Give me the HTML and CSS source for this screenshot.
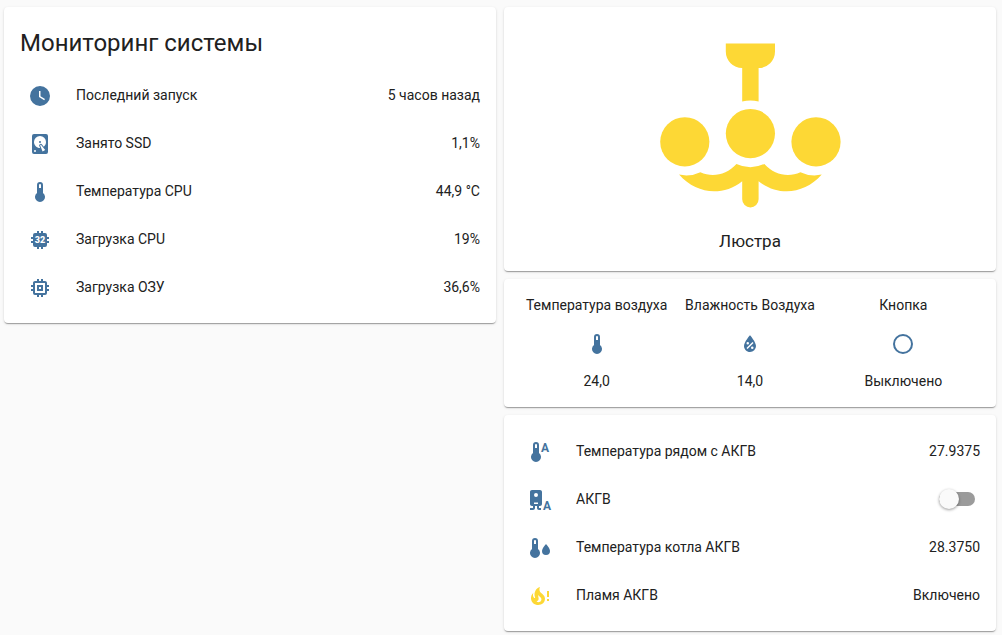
FILE: index.html
```html
<!DOCTYPE html>
<html lang="ru">
<head>
  <meta charset="UTF-8">
  <meta name="viewport" content="width=device-width, initial-scale=1">
  <title>Мониторинг системы</title>
  <link rel="stylesheet" href="styles.css">
</head>
<body>
  <main class="columns">
    <div class="column">
      <section class="card">
        <h1 class="card-header">Мониторинг системы</h1>
        <div class="entities">
          <div class="row">
            <svg class="icon" viewBox="0 0 24 24"><path d="M12,2A10,10 0 0,0 2,12A10,10 0 0,0 12,22A10,10 0 0,0 22,12A10,10 0 0,0 12,2M16.2,16.2L11,13V7H12.5V12.2L17,14.9L16.2,16.2Z"/></svg>
            <span class="name">Последний запуск</span>
            <span class="state">5 часов назад</span>
          </div>
          <div class="row">
            <svg class="icon" viewBox="0 0 24 24"><path d="M6,2H18A2,2 0 0,1 20,4V20A2,2 0 0,1 18,22H6A2,2 0 0,1 4,20V4A2,2 0 0,1 6,2M12,4A6,6 0 0,0 6,10C6,13.31 8.69,16 12.1,16L11.22,13.77C10.95,13.29 11.11,12.68 11.59,12.4L12.45,11.9C12.93,11.63 13.54,11.79 13.82,12.27L15.74,14.69C17.12,13.59 18,11.9 18,10A6,6 0 0,0 12,4M12,9A1,1 0 0,1 13,10A1,1 0 0,1 12,11A1,1 0 0,1 11,10A1,1 0 0,1 12,9M7,18A1,1 0 0,0 6,19A1,1 0 0,0 7,20A1,1 0 0,0 8,19A1,1 0 0,0 7,18M12.09,13.27L14.58,19.58L17.17,18.08L12.95,12.77L12.09,13.27Z"/></svg>
            <span class="name">Занято SSD</span>
            <span class="state">1,1%</span>
          </div>
          <div class="row">
            <svg class="icon" viewBox="0 0 24 24"><path d="M15 13V5A3 3 0 0 0 9 5V13A5 5 0 1 0 15 13M12 4A1 1 0 0 1 13 5V8H11V5A1 1 0 0 1 12 4Z"/></svg>
            <span class="name">Температура CPU</span>
            <span class="state">44,9 °C</span>
          </div>
          <div class="row">
            <svg class="icon" viewBox="0 0 24 24"><path d="M9,3V5H7A2,2 0 0,0 5,7V9H3V11H5V13H3V15H5V17A2,2 0 0,0 7,19H9V21H11V19H13V21H15V19H17A2,2 0 0,0 19,17V15H21V13H19V11H21V9H19V7A2,2 0 0,0 17,5H15V3H13V5H11V3Z"/><text class="bits" x="12" y="15" text-anchor="middle">32</text></svg>
            <span class="name">Загрузка CPU</span>
            <span class="state">19%</span>
          </div>
          <div class="row">
            <svg class="icon" viewBox="0 0 24 24"><path d="M17,17H7V7H17M21,11V9H19V7C19,5.89 18.1,5 17,5H15V3H13V5H11V3H9V5H7C5.89,5 5,5.89 5,7V9H3V11H5V13H3V15H5V17A2,2 0 0,0 7,19H9V21H11V19H13V21H15V19H17A2,2 0 0,0 19,17V15H21V13H19V11M13,13H11V11H13M15,9H9V15H15V9Z"/></svg>
            <span class="name">Загрузка ОЗУ</span>
            <span class="state">36,6%</span>
          </div>
        </div>
      </section>
    </div>

    <div class="column">
      <section class="card light">
        <svg class="light-icon" viewBox="0 0 24 24">
          <circle cx="4" cy="14" r="3"/>
          <circle cx="12" cy="13" r="3"/>
          <circle cx="20" cy="14" r="3"/>
          <path d="M9,2H15V3A2,2 0 0,1 13,5V9.1A4,4 0 0,0 11,9.1V5A2,2 0 0,1 9,3Z"/>
          <path d="M3.3,18A4,4 0 0,0 5.9,17.7C7.4,18.4 9.1,18 10.3,16.7A4,4 0 0,0 13.7,16.7C14.9,18 16.6,18.4 18.1,17.7A4,4 0 0,0 20.7,18C18.6,20.4 15.4,20.7 13,18.8V21A1,1 0 0,1 11,21V18.8C8.6,20.7 5.4,20.4 3.3,18Z"/>
        </svg>
        <div class="light-name">Люстра</div>
      </section>

      <section class="card glance">
        <div class="glance-item">
          <span>Температура воздуха</span>
          <svg class="icon" viewBox="0 0 24 24"><path d="M15 13V5A3 3 0 0 0 9 5V13A5 5 0 1 0 15 13M12 4A1 1 0 0 1 13 5V8H11V5A1 1 0 0 1 12 4Z"/></svg>
          <span>24,0</span>
        </div>
        <div class="glance-item">
          <span>Влажность Воздуха</span>
          <svg class="icon" viewBox="0 0 24 24"><path d="M12,3.25C12,3.25 6,10 6,14C6,17.32 8.69,20 12,20A6,6 0 0,0 18,14C18,10 12,3.25 12,3.25M14.47,9.97L15.53,11.03L9.53,17.03L8.47,15.97M9.75,10A1.25,1.25 0 0,1 11,11.25A1.25,1.25 0 0,1 9.75,12.5A1.25,1.25 0 0,1 8.5,11.25A1.25,1.25 0 0,1 9.75,10M14.25,14.5A1.25,1.25 0 0,1 15.5,15.75A1.25,1.25 0 0,1 14.25,17A1.25,1.25 0 0,1 13,15.75A1.25,1.25 0 0,1 14.25,14.5Z"/></svg>
          <span>14,0</span>
        </div>
        <div class="glance-item">
          <span>Кнопка</span>
          <svg class="icon" viewBox="0 0 24 24"><path d="M12,20A8,8 0 0,1 4,12A8,8 0 0,1 12,4A8,8 0 0,1 20,12A8,8 0 0,1 12,20M12,2A10,10 0 0,0 2,12A10,10 0 0,0 12,22A10,10 0 0,0 22,12A10,10 0 0,0 12,2Z"/></svg>
          <span>Выключено</span>
        </div>
      </section>

      <section class="card entities boiler">
        <div class="row">
          <svg class="icon" viewBox="0 0 24 24"><path d="M11 13V5A3 3 0 0 0 5 5V13A5 5 0 1 0 11 13M8 4A1 1 0 0 1 9 5V8H7V5A1 1 0 0 1 8 4Z"/><text class="auto" x="17" y="12" text-anchor="middle">A</text></svg>
          <span class="name">Температура рядом с АКГВ</span>
          <span class="state">27.9375</span>
        </div>
        <div class="row">
          <svg class="icon" viewBox="0 0 24 24"><path d="M4 2C2.89 2 2 2.89 2 4V16C2 17.11 2.89 18 4 18H5V20H2V22H5C6.11 22 7 21.11 7 20V18H9V20C9 21.11 9.89 22 11 22H13V20H11V18H12C13.11 18 14 17.11 14 16V4C14 2.89 13.11 2 12 2H4M8 4.97A2 2 0 0 1 10 6.97A2 2 0 0 1 8 8.97A2 2 0 0 1 6 6.97A2 2 0 0 1 8 4.97M6 14.5H10V16H6V14.5Z"/><text class="auto" x="19" y="22" text-anchor="middle">A</text></svg>
          <label class="name" for="akgv">АКГВ</label>
          <input class="switch" type="checkbox" role="switch" id="akgv">
        </div>
        <div class="row">
          <svg class="icon" viewBox="0 0 24 24"><path d="M18 8C18 8 14 12.33 14 15A4 4 0 0 0 22 15C22 12.33 18 8 18 8M10 13V5A3 3 0 0 0 4 5V13A5 5 0 1 0 10 13M7 4A1 1 0 0 1 8 5V8H6V5A1 1 0 0 1 7 4Z"/></svg>
          <span class="name">Температура котла АКГВ</span>
          <span class="state">28.3750</span>
        </div>
        <div class="row">
          <svg class="icon icon-on" viewBox="0 0 24 24"><path d="M15.66,11.2C15.43,10.9 15.15,10.64 14.89,10.38C14.22,9.78 13.46,9.35 12.82,8.72C11.33,7.26 11,4.85 11.95,3C11,3.23 10.17,3.75 9.46,4.32C6.87,6.4 5.85,10.07 7.07,13.22C7.11,13.32 7.15,13.42 7.15,13.55C7.15,13.77 7,13.97 6.8,14.05C6.57,14.15 6.33,14.09 6.14,13.93C6.08,13.88 6.04,13.83 6,13.76C4.87,12.33 4.69,10.28 5.45,8.64C3.78,10 2.87,12.3 3,14.47C3.06,14.97 3.12,15.47 3.29,15.97C3.43,16.57 3.7,17.17 4,17.7C5.08,19.43 6.95,20.67 8.96,20.92C11.1,21.19 13.39,20.8 15.03,19.32C16.86,17.66 17.5,15 16.56,12.72L16.43,12.46C16.22,12 15.66,11.2 15.66,11.2M12.5,17.5C12.22,17.74 11.76,18 11.4,18.1C10.28,18.5 9.16,17.94 8.5,17.28C9.69,17 10.4,16.12 10.61,15.23C10.78,14.43 10.46,13.77 10.33,13C10.21,12.26 10.23,11.63 10.5,10.94C10.69,11.32 10.89,11.7 11.13,12C11.9,13 13.11,13.44 13.37,14.8C13.41,14.94 13.43,15.08 13.43,15.23C13.46,16.05 13.1,16.95 12.5,17.5H12.5M21,13H19V7H21V13M21,17H19V15H21V17Z"/></svg>
          <span class="name">Пламя АКГВ</span>
          <span class="state">Включено</span>
        </div>
      </section>
    </div>
  </main>
</body>
</html>
```
FILE: styles.css
```css
body {
  margin: 0;
  padding: 7px 6px 4px 4px;
  background-color: #fafafa;
  color: #212121;
  font-family: Roboto, sans-serif;
  font-size: 14px;
  line-height: 20px;
}
.columns {
  display: grid;
  grid-template-columns: 1fr 1fr;
  align-items: start;
  gap: 8px;
}
.column {
  display: flex;
  flex-direction: column;
  gap: 8px;
}
.card {
  background-color: #fff;
  border-radius: 4px;
  box-shadow: 0 2px 1px -1px rgba(0, 0, 0, 0.2), 0 1px 1px 0 rgba(0, 0, 0, 0.14), 0 1px 3px 0 rgba(0, 0, 0, 0.12);
}
.card-header {
  margin: 0;
  padding: 12px 16px 0;
  font-size: 24px;
  font-weight: 400;
  line-height: 48px;
}
.entities {
  display: flex;
  flex-direction: column;
  gap: 8px;
  padding: 8px 16px 16px;
}
.boiler {
  padding-top: 16px;
}
.row {
  display: flex;
  align-items: center;
  height: 40px;
}
.icon {
  display: block;
  width: 24px;
  height: 24px;
  padding: 9px 8px 7px;
  fill: #44739e;
}
.icon-on {
  fill: #fdd835;
}
.bits {
  fill: #fff;
  font-size: 9px;
  font-weight: 900;
}
.auto {
  font-size: 12px;
  font-weight: 700;
}
.name {
  flex: 1;
  margin-left: 16px;
}
.light {
  padding: 20px 0;
}
.light-icon {
  display: block;
  width: 40%;
  margin: 0 auto;
  fill: #fdd835;
}
.light-name {
  margin-top: 7px;
  font-size: 17px;
  text-align: center;
}
.glance {
  display: grid;
  grid-template-columns: repeat(3, 1fr);
  padding: 16px;
}
.glance-item {
  display: flex;
  flex-direction: column;
  align-items: center;
  gap: 8px;
  white-space: nowrap;
}

/* toggle */
.switch {
  appearance: none;
  display: flex;
  align-items: center;
  width: 36px;
  height: 14px;
  margin: 0 5px;
  border-radius: 7px;
  background-color: #9b9b9b;
}
.switch::before {
  content: "";
  width: 20px;
  height: 20px;
  flex: none;
  border-radius: 50%;
  background-color: #fafafa;
  box-shadow: 0 1px 3px rgba(0, 0, 0, 0.4);
}
.switch:checked {
  justify-content: flex-end;
}
```
